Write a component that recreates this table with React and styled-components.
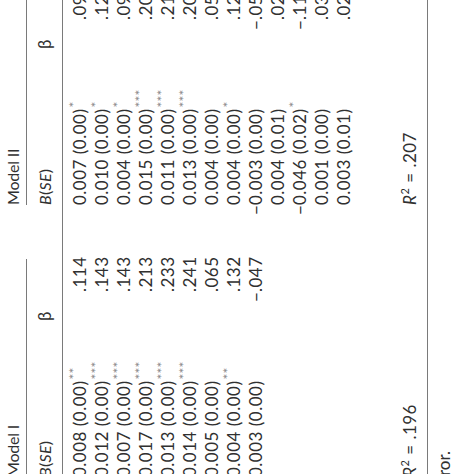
import React from "react";
import styled, { createGlobalStyle } from "styled-components";

const GlobalStyle = createGlobalStyle`
  *, *::before, *::after { box-sizing: border-box; }
  html, body { margin: 0; padding: 0; background: #fff; overflow: hidden; }
  body {
    font-family: Lato, "Open Sans", sans-serif;
    color: #303030;
    font-size: 17px;
  }
`;

const modelOne = [
  ["0.008", "(0.00)", "**", ".114"],
  ["0.012", "(0.00)", "***", ".143"],
  ["0.007", "(0.00)", "***", ".143"],
  ["0.017", "(0.00)", "***", ".213"],
  ["0.013", "(0.00)", "***", ".233"],
  ["0.014", "(0.00)", "***", ".241"],
  ["0.005", "(0.00)", "", ".065"],
  ["0.004", "(0.00)", "**", ".132"],
  ["-0.003", "(0.00)", "", "-.047"],
];

const modelTwo = [
  ["0.007", "(0.00)", "*", ".096"],
  ["0.010", "(0.00)", "*", ".120"],
  ["0.004", "(0.00)", "*", ".093"],
  ["0.015", "(0.00)", "***", ".200"],
  ["0.011", "(0.00)", "***", ".217"],
  ["0.013", "(0.00)", "***", ".205"],
  ["0.004", "(0.00)", "", ".057"],
  ["0.004", "(0.00)", "*", ".120"],
  ["-0.003", "(0.00)", "", "-.054"],
  ["0.004", "(0.01)", "", ".02"],
  ["-0.046", "(0.02)", "*", "-.112"],
  ["0.001", "(0.00)", "", ".039"],
  ["0.003", "(0.01)", "", ".027"],
];

function Value({ text }) {
  if (text.startsWith("-")) {
    return (
      <>
        <Minus>−</Minus>
        {text.slice(1)}
      </>
    );
  }
  return text;
}

function Estimate({ row }) {
  if (!row) return <BCell />;
  return (
    <BCell>
      <Value text={row[0]} /> {row[1]}
      {row[2] && <Stars>{row[2]}</Stars>}
    </BCell>
  );
}

function Beta({ row }) {
  if (!row) return <BetaCell />;
  return (
    <BetaCell>
      <Value text={row[3]} />
    </BetaCell>
  );
}

export default function App() {
  return (
    <>
      <GlobalStyle />
      <Frame>
        <Table>
          <Row $h={27}>
            <ModelCell>Model I</ModelCell>
            <span />
            <ModelCell>Model II</ModelCell>
          </Row>
          <Row $h={36} $rule>
            <HeadCell>
              <i>B</i>(<i>SE</i>)
            </HeadCell>
            <BetaHead>β</BetaHead>
            <span />
            <HeadCell>
              <i>B</i>(<i>SE</i>)
            </HeadCell>
            <BetaHead>β</BetaHead>
          </Row>
          <Body>
            {modelTwo.map((two, idx) => (
              <Row $h={22} key={`row-${idx}`}>
                <Estimate row={modelOne[idx]} />
                <Beta row={modelOne[idx]} />
                <span />
                <Estimate row={two} />
                <Beta row={two} />
              </Row>
            ))}
          </Body>
          <Row $h={29} $rule $top>
            <BCell>
              <i>R</i>
              <Sq>2</Sq> = .196
            </BCell>
            <span />
            <span />
            <BCell>
              <i>R</i>
              <Sq>2</Sq> = .207
            </BCell>
            <span />
          </Row>
          <NoteRow>
            <NoteBox>
              <NoteText>
                <i>Note</i>. <i>B</i> = unstandardized coefficient; β =
                standardized coefficient; <i>SE</i> = standard error.
              </NoteText>
            </NoteBox>
          </NoteRow>
        </Table>
      </Frame>
    </>
  );
}

const Frame = styled.div`
  width: 474px;
  height: 474px;
  transform: rotate(-90deg);
  background: #fff;
`;

const Table = styled.div`
  display: flex;
  flex-direction: column;
  width: 600px;
  margin-left: -3px;
`;

const Row = styled.div`
  display: grid;
  grid-template-columns: 150px 68px 54px 150px 68px;
  height: ${(p) => p.$h}px;
  align-items: ${(p) => (p.$top ? "start" : "center")};
  line-height: 22px;
  white-space: nowrap;
  border-bottom: ${(p) => (p.$rule ? "1.5px solid #7a7a7a" : "none")};
`;

const Body = styled.div`
  display: flex;
  flex-direction: column;
  padding-top: 6px;
  margin-bottom: 44px;
`;

const ModelCell = styled.div`
  grid-column: span 2;
  align-self: stretch;
  padding-top: 4px;
  border-bottom: 1.5px solid #7a7a7a;
  font-size: 16px;
  letter-spacing: -0.2px;
  line-height: 18px;
`;

const HeadCell = styled.div`
  font-size: 16px;
  letter-spacing: 0.3px;
`;

const BCell = styled.div`
  white-space: nowrap;
  letter-spacing: 0.5px;
`;

const BetaHead = styled.div`
  padding-left: 6px;
`;

const BetaCell = styled.div`
  padding-left: 35px;
  letter-spacing: 0.5px;
`;

const Minus = styled.span`
  display: inline-block;
  width: 10px;
  margin-left: -10px;
`;

const Stars = styled.sup`
  font-size: 14px;
  line-height: 0;
  color: #858585;
  letter-spacing: 0;
  margin-left: 1px;
`;

const Sq = styled.sup`
  font-size: 11px;
  line-height: 0;
`;

const NoteRow = styled.div`
  padding-top: 7px;
`;

const NoteBox = styled.div`
  width: 26px;
  display: flex;
  justify-content: flex-end;
`;

const NoteText = styled.div`
  white-space: nowrap;
  font-size: 17px;
  line-height: 18px;
`;
